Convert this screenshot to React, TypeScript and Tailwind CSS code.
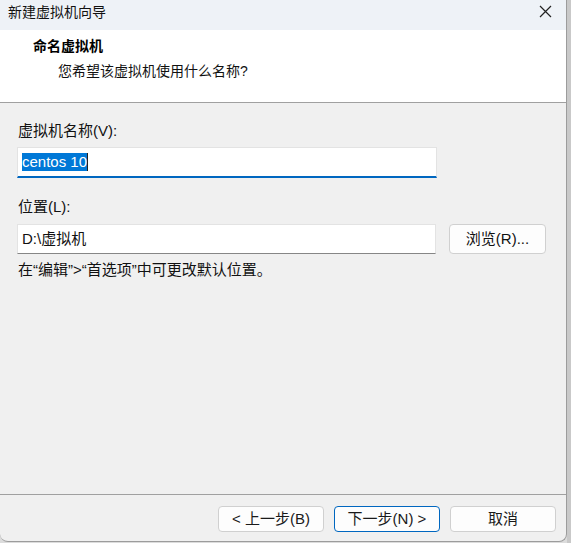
const font = { fontFamily: '"Liberation Sans", "Noto Sans CJK SC", sans-serif' };

const WizardButton = ({ label, primary = false }: { label: string; primary?: boolean }) => (
  <button
    className={`w-[106px] h-[26px] rounded-[4px] bg-[#fdfdfd] text-[15px] leading-[18px] text-[#1a1a1a] flex items-center justify-center ${
      primary ? 'border border-[#0067c0]' : 'border border-[#d0d0d0]'
    }`}
  >
    {label}
  </button>
);

export default function App() {
  return (
    <div className="w-[571px] h-[543px] flex bg-[#dcdcdc]" style={font}>
      {/* Dialog window */}
      <div className="w-[567px] h-[542px] flex flex-col bg-[#f0f0f0] border-r border-b border-[#9c9c9c] rounded-br-[8px] rounded-bl-[8px] overflow-hidden">
        {/* Title bar */}
        <div className="h-[30px] shrink-0 bg-[#eef2f7] flex items-start justify-between pl-[8px] pr-[14px] pt-[4px]">
          <span className="text-[14px] leading-[16px] text-[#111]">新建虚拟机向导</span>
          <svg width="13" height="13" viewBox="0 0 13 13" className="mt-[1px]">
            <path d="M1 1 L12 12 M12 1 L1 12" stroke="#222" strokeWidth="1.2" fill="none" />
          </svg>
        </div>

        {/* Header */}
        <div className="h-[73px] shrink-0 bg-white border-b border-[#a0a0a0] pt-[8px]">
          <div className="pl-[33px] text-[14px] leading-[16px] font-bold text-black">命名虚拟机</div>
          <div className="pl-[58px] mt-[9px] text-[14px] leading-[16px] text-[#111]">您希望该虚拟机使用什么名称?</div>
        </div>

        {/* Body */}
        <div className="flex-1 px-[17px] pt-[18px] text-[15px] text-[#111]">
          <div className="pl-[1px] leading-[20px]">虚拟机名称(V):</div>
          <div className="mt-[6px] w-[420px] h-[31px] bg-white border border-[#e3e3e3] border-b-2 border-b-[#0067c0] flex items-center pl-[4px]">
            <span className="bg-[#0078d7] text-white text-[15px] leading-[18px]">centos 10</span>
            <span className="w-[1px] h-[18px] bg-[#222]" />
          </div>

          <div className="mt-[19px] pl-[1px] leading-[20px]">位置(L):</div>
          <div className="mt-[7px] flex items-center">
            <div className="w-[419px] h-[30px] bg-white border border-[#e3e3e3] border-b-[#868686] flex items-center pl-[4px] leading-[20px]">
              D:\虚拟机
            </div>
            <button className="ml-[13px] w-[97px] h-[30px] rounded-[4px] bg-[#fdfdfd] border border-[#d0d0d0] text-[15px] flex items-center justify-center">
              浏览(R)...
            </button>
          </div>

          <div className="mt-[6px] pl-[1px] leading-[20px]">在“编辑”&gt;“首选项”中可更改默认位置。</div>
        </div>

        {/* Footer */}
        <div className="shrink-0 border-t border-[#a0a0a0] pt-[11px] pb-[9px] pr-[10px] flex justify-end gap-[10px]">
          <WizardButton label="< 上一步(B)" />
          <WizardButton label="下一步(N) >" primary />
          <WizardButton label="取消" />
        </div>
      </div>
      <div className="flex-1 bg-[#c9c9c9]" />
    </div>
  );
}
